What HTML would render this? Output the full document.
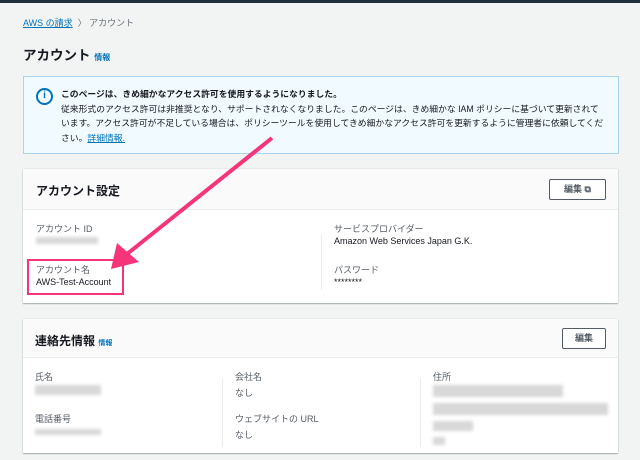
<!DOCTYPE html><html><head><meta charset="utf-8"><style>
*{box-sizing:border-box;margin:0;padding:0}
body{width:640px;height:460px;overflow:hidden;background:#f2f3f3;font-family:"Liberation Sans","Noto Sans CJK JP",sans-serif;color:#16191f;position:relative}
.a{position:absolute;white-space:nowrap}
.lbl{font-size:9px;color:#545b64}
.val{font-size:9px;color:#16191f}
.card{position:absolute;left:23px;width:595px;background:#fff;box-shadow:0 1px 1px rgba(0,28,36,.3),0 0 1px rgba(0,28,36,.2)}
.hd{position:absolute;left:0;top:0;width:100%;background:#fafafa;border-bottom:1px solid #eaeded}
.btn{position:absolute;border:1px solid #545b64;background:#fff;font-size:9px;font-weight:bold;color:#545b64;text-align:center;border-radius:2px}
.blur{position:absolute;background:#d8d8d8;filter:blur(1.5px)}
.vd{position:absolute;width:1px;background:#eaeded}
</style></head><body>
<div class="a" style="left:0;top:0;width:640px;height:3px;background:#232f3e"></div>
<div class="a" style="left:23px;top:16px;font-size:9px"><span style="color:#0073bb;text-decoration:underline">AWS の請求</span><span style="color:#687078"> &nbsp;〉 アカウント</span></div>
<div class="a" style="left:23px;top:44px;font-size:13.5px;font-weight:bold">アカウント <span style="font-size:8px;color:#0073bb">情報</span></div>
<div class="a" style="left:23px;top:76px;width:596px;height:78px;background:#f1faff;border:1px solid #a8d4f0"></div>
<div class="a" style="left:36px;top:88px;width:17px;height:17px;border:2.5px solid #0073bb;border-radius:50%;color:#0073bb;font-size:10px;font-weight:bold;text-align:center;line-height:12px">i</div>
<div class="a" style="left:61px;top:87px;font-size:8.8px;line-height:14.5px;color:#16191f"><b>このページは、きめ細かなアクセス許可を使用するようになりました。</b><br>従来形式のアクセス許可は非推奨となり、サポートされなくなりました。このページは、きめ細かな IAM ポリシーに基づいて更新されて<br>います。アクセス許可が不足している場合は、ポリシーツールを使用してきめ細かなアクセス許可を更新するように管理者に依頼してくだ<br>さい。<span style="color:#0073bb;text-decoration:underline">詳細情報.</span></div>

<div class="card" style="top:169px;height:134px">
<div class="hd" style="height:41px"></div>
<div class="a" style="left:13px;top:13px;font-size:12px;font-weight:bold">アカウント設定</div>
<div class="btn" style="left:526px;top:10px;width:57px;height:21px;line-height:19px">編集 ⧉</div>
<div class="a lbl" style="left:13px;top:53px">アカウント ID</div>
<div class="blur" style="left:13px;top:68px;width:62px;height:7px"></div>
<div class="a lbl" style="left:13px;top:94px">アカウント名</div>
<div class="a val" style="left:13px;top:108px">AWS-Test-Account</div>
<div class="vd" style="left:298px;top:65px;height:56px"></div>
<div class="a lbl" style="left:311px;top:53px">サービスプロバイダー</div>
<div class="a val" style="left:311px;top:67px">Amazon Web Services Japan G.K.</div>
<div class="a lbl" style="left:311px;top:94px">パスワード</div>
<div class="a val" style="left:311px;top:108px">********</div>
</div>

<div class="card" style="top:319px;height:134px">
<div class="hd" style="height:39px"></div>
<div class="a" style="left:12px;top:13px;font-size:12px;font-weight:bold">連絡先情報 <span style="font-size:7px;color:#0073bb">情報</span></div>
<div class="btn" style="left:539px;top:9px;width:44px;height:21px;line-height:19px">編集</div>
<div class="a lbl" style="left:12px;top:51px">氏名</div>
<div class="blur" style="left:12px;top:66px;width:66px;height:10px"></div>
<div class="a lbl" style="left:12px;top:93px">電話番号</div>
<div class="blur" style="left:12px;top:110px;width:66px;height:6px"></div>
<div class="vd" style="left:199px;top:60px;height:68px"></div>
<div class="a lbl" style="left:212px;top:51px">会社名</div>
<div class="a lbl" style="left:212px;top:67px">なし</div>
<div class="a lbl" style="left:212px;top:93px">ウェブサイトの URL</div>
<div class="a lbl" style="left:212px;top:109px">なし</div>
<div class="vd" style="left:397px;top:60px;height:68px"></div>
<div class="a lbl" style="left:410px;top:51px">住所</div>
<div class="blur" style="left:410px;top:66px;width:130px;height:12px"></div>
<div class="blur" style="left:410px;top:84px;width:175px;height:12px"></div>
<div class="blur" style="left:410px;top:102px;width:40px;height:10px"></div>
<div class="blur" style="left:410px;top:118px;width:12px;height:8px"></div>
</div>

<div class="a" style="left:27px;top:259px;width:97px;height:36px;border:2.5px solid #f5347a"></div>
<svg class="a" style="left:0;top:0" width="640" height="460"><line x1="272" y1="138" x2="122" y2="258" stroke="#f5347a" stroke-width="4"/><polygon points="111,269 117,243 139,262" fill="#f5347a"/></svg>
</body></html>
